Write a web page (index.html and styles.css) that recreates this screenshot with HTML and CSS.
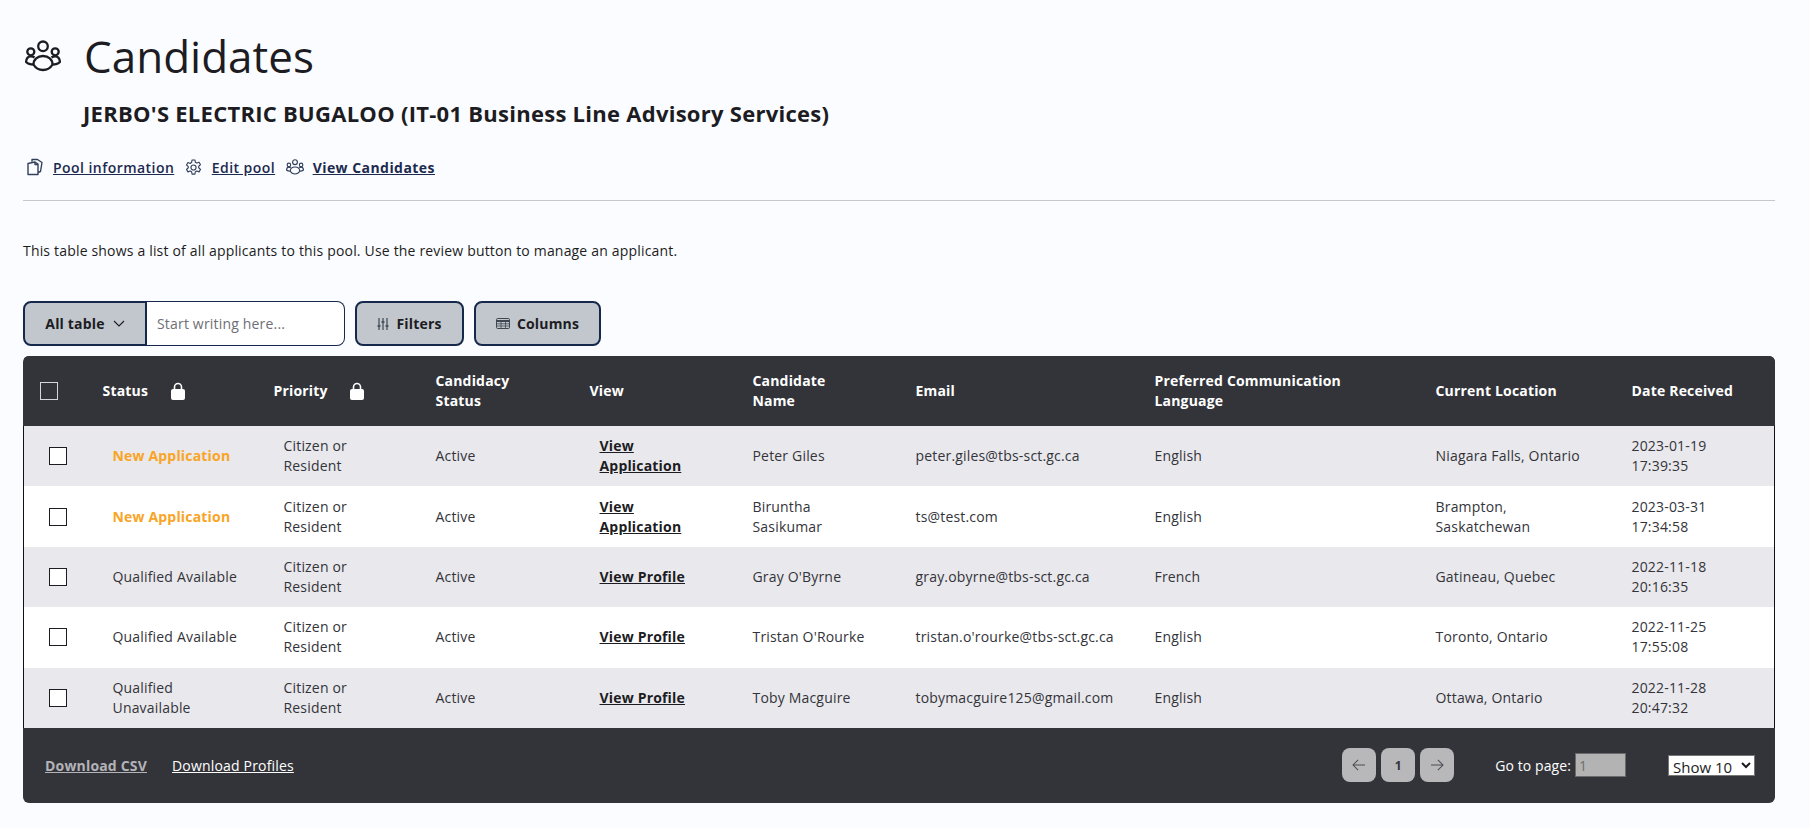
FILE: index.html
```html
<!DOCTYPE html>
<html lang="en">
<head>
<meta charset="utf-8">
<title>Candidates</title>
<link rel="stylesheet" href="styles.css">
</head>
<body>
<svg class="defs" width="0" height="0" aria-hidden="true">
  <symbol id="people" viewBox="0 0 36 32">
    <g fill="none" stroke="currentColor" stroke-width="2.300">
      <circle cx="18" cy="6.300" r="4.800"/>
      <circle cx="5.800" cy="11.800" r="3.500"/>
      <circle cx="30.200" cy="11.800" r="3.500"/>
      <path d="M8.500 24.500c0-5 4-8.500 9.500-8.500s9.500 3.500 9.500 8.500c-2 3.500-5.500 5.500-9.500 5.500s-7.500-2-9.500-5.500z"/>
      <path d="M9.500 17.500c-1-.8-2.200-1.200-3.700-1.200-2.800 0-4.500 2-4.700 5.700 1.500 1.600 4 2.500 7.600 2.500"/>
      <path d="M26.500 17.500c1-.8 2.200-1.200 3.700-1.200 2.800 0 4.500 2 4.700 5.700-1.500 1.600-4 2.500-7.600 2.500"/>
    </g>
  </symbol>
</svg>
<main class="page">
  <header class="head">
    <h1 class="title">
      <svg class="title-icon"><use href="#people"/></svg>
      <span>Candidates</span>
    </h1>
    <h2 class="subtitle">JERBO'S ELECTRIC BUGALOO (IT-01 Business Line Advisory Services)</h2>
    <nav class="tabs">
      <svg class="tab-icon" viewBox="0 0 16 18" fill="none" stroke="currentColor" stroke-width="1.400" stroke-linejoin="round">
        <path d="M1 5.500 8 4l3 2v10.500H1z"/>
        <path d="M5 3.800V1.500h5.500l4.500 3-1.500 9-2.500 1"/>
        <path d="M8 4v2.500h3"/>
      </svg>
      <a class="tab" href="#">Pool information</a>
      <svg class="tab-icon tab-gear" viewBox="0 0 18 18" fill="none" stroke="currentColor" stroke-width="1.200" stroke-linejoin="round">
        <circle cx="9" cy="9" r="2.700"/>
        <path d="M7.500 1h3l.5 2.500 1.500.8 2.400-.9 1.500 2.600-1.900 1.700v1.600l1.900 1.700-1.500 2.600-2.400-.9-1.500.8-.5 2.500h-3l-.5-2.500-1.500-.8-2.400.9-1.500-2.600 1.900-1.700V8.100L1.600 6.400l1.500-2.600 2.400.9L7 3.500z"/>
      </svg>
      <a class="tab" href="#">Edit pool</a>
      <svg class="tab-icon tab-people"><use href="#people"/></svg>
      <a class="tab tab-current" href="#">View Candidates</a>
    </nav>
  </header>
  <hr class="rule">
  <p class="intro">This table shows a list of all applicants to this pool. Use the review button to manage an applicant.</p>

  <div class="toolbar">
    <div class="search">
      <button class="search-scope" type="button">All table
        <svg class="chev" viewBox="0 0 12 7" fill="none" stroke="currentColor" stroke-width="1.100"><path d="M1 1l5 5 5-5"/></svg>
      </button>
      <input class="search-input" type="text" placeholder="Start writing here...">
    </div>
    <button class="tool tool-filters" type="button">
      <svg class="tool-icon" viewBox="0 0 12 12" fill="none" stroke="currentColor" stroke-width="1.200"><path d="M2 0v12M6 0v12M10 0v12"/><path d="M.5 8h3M4.500 4h3M8.500 8h3" stroke-width="1.500"/></svg>
      Filters
    </button>
    <button class="tool tool-columns" type="button">
      <svg class="tool-icon tool-icon-wide" viewBox="0 0 14 11" fill="none" stroke="currentColor"><rect x=".5" y=".5" width="13" height="10" rx="1.200"/><path d="M.5 3h13" stroke-width="2"/><path d="M.5 5.800h13M.5 8h13M5 3v7.500M9.500 3v7.500" stroke-width=".8"/></svg>
      Columns
    </button>
  </div>

  <section class="table-card">
    <table class="grid">
      <colgroup>
        <col class="c-check"><col class="c-status"><col class="c-priority"><col class="c-cand"><col class="c-view"><col class="c-name"><col class="c-email"><col class="c-lang"><col class="c-loc"><col class="c-date">
      </colgroup>
      <thead>
        <tr>
          <th class="th-check"><span class="box box-head"></span></th>
          <th><span class="locked">Status<svg class="lock lock-status" viewBox="0 0 14 18"><path d="M3.500 8V5a3.500 3.500 0 0 1 7 0v3" fill="none" stroke="#fff" stroke-width="1.600"/><rect x="0" y="7" width="14" height="11" rx="2" fill="#fff"/></svg></span></th>
          <th><span class="locked">Priority<svg class="lock lock-priority" viewBox="0 0 14 18"><path d="M3.500 8V5a3.500 3.500 0 0 1 7 0v3" fill="none" stroke="#fff" stroke-width="1.600"/><rect x="0" y="7" width="14" height="11" rx="2" fill="#fff"/></svg></span></th>
          <th>Candidacy<br>Status</th>
          <th>View</th>
          <th>Candidate<br>Name</th>
          <th>Email</th>
          <th>Preferred Communication<br>Language</th>
          <th>Current Location</th>
          <th>Date Received</th>
        </tr>
      </thead>
      <tbody>
        <tr class="odd">
          <td class="td-check"><span class="box"></span></td>
          <td class="inset new">New Application</td>
          <td class="inset">Citizen or<br>Resident</td>
          <td>Active</td>
          <td class="inset"><a class="view" href="#">View<br>Application</a></td>
          <td>Peter Giles</td>
          <td>peter.giles@tbs-sct.gc.ca</td>
          <td>English</td>
          <td>Niagara Falls, Ontario</td>
          <td>2023-01-19<br>17:39:35</td>
        </tr>
        <tr>
          <td class="td-check"><span class="box"></span></td>
          <td class="inset new">New Application</td>
          <td class="inset">Citizen or<br>Resident</td>
          <td>Active</td>
          <td class="inset"><a class="view" href="#">View<br>Application</a></td>
          <td>Biruntha<br>Sasikumar</td>
          <td>ts@test.com</td>
          <td>English</td>
          <td>Brampton,<br>Saskatchewan</td>
          <td>2023-03-31<br>17:34:58</td>
        </tr>
        <tr class="odd">
          <td class="td-check"><span class="box"></span></td>
          <td class="inset">Qualified Available</td>
          <td class="inset">Citizen or<br>Resident</td>
          <td>Active</td>
          <td class="inset"><a class="view" href="#">View Profile</a></td>
          <td>Gray O'Byrne</td>
          <td>gray.obyrne@tbs-sct.gc.ca</td>
          <td>French</td>
          <td>Gatineau, Quebec</td>
          <td>2022-11-18<br>20:16:35</td>
        </tr>
        <tr>
          <td class="td-check"><span class="box"></span></td>
          <td class="inset">Qualified Available</td>
          <td class="inset">Citizen or<br>Resident</td>
          <td>Active</td>
          <td class="inset"><a class="view" href="#">View Profile</a></td>
          <td>Tristan O'Rourke</td>
          <td>tristan.o'rourke@tbs-sct.gc.ca</td>
          <td>English</td>
          <td>Toronto, Ontario</td>
          <td>2022-11-25<br>17:55:08</td>
        </tr>
        <tr class="odd">
          <td class="td-check"><span class="box"></span></td>
          <td class="inset">Qualified<br>Unavailable</td>
          <td class="inset">Citizen or<br>Resident</td>
          <td>Active</td>
          <td class="inset"><a class="view" href="#">View Profile</a></td>
          <td>Toby Macguire</td>
          <td>tobymacguire125@gmail.com</td>
          <td>English</td>
          <td>Ottawa, Ontario</td>
          <td>2022-11-28<br>20:47:32</td>
        </tr>
      </tbody>
    </table>
    <footer class="table-foot">
      <a class="dl dl-csv" href="#">Download CSV</a>
      <a class="dl" href="#">Download Profiles</a>
      <div class="pager">
        <button class="pg" type="button"><svg class="arrow" viewBox="0 0 16 14" fill="none" stroke="currentColor" stroke-width="1.200"><path d="M15 7H1M7 1 1 7l6 6"/></svg></button>
        <button class="pg pg-num" type="button">1</button>
        <button class="pg" type="button"><svg class="arrow" viewBox="0 0 16 14" fill="none" stroke="currentColor" stroke-width="1.200"><path d="M1 7h14M9 1l6 6-6 6"/></svg></button>
      </div>
      <label class="goto">Go to page:
        <input class="goto-input" type="text" value="1" disabled>
      </label>
      <select class="show">
        <option>Show 10</option>
      </select>
    </footer>
  </section>
</main>
</body>
</html>
```

FILE: styles.css
```css
* { box-sizing: border-box; }
html, body { margin: 0; height: 100%; }
body {
  background: #fbfcff;
  color: #1c1c22;
  font-family: "Open Sans", "Noto Sans", sans-serif;
  font-size: 14px;
  letter-spacing: .18px;
  overflow: hidden;
}
.defs { position: absolute; }
.page { padding: 27px 35px 0 23px; }
.title {
  display: flex;
  align-items: center;
  gap: 23px;
  margin: 0;
  height: 58px;
  padding-left: 2px;
  font-size: 44px;
  font-weight: 400;
  line-height: 58px;
  letter-spacing: 0;
}
.title-icon { width: 36px; height: 32px; }
.subtitle {
  margin: 13px 0 0 60px;
  font-size: 22px;
  font-weight: 700;
  line-height: 30px;
  letter-spacing: .27px;
}
.tabs {
  display: flex;
  align-items: center;
  margin: 29px 0 0 4px;
  height: 20px;
  color: #33415c;
}
.tab-icon { width: 16px; height: 18px; flex: none; }
.tab-gear { width: 17px; height: 17px; }
.tab-people { width: 18px; height: 16px; }
.tab {
  margin: 0 10.5px 0 10px;
  color: #1b2a4e;
  font-size: 14px;
  font-weight: 600;
  letter-spacing: .45px;
}
.tab-current { margin-left: 9px; font-weight: 700; }
.rule { margin: 23px 0 0; border: 0; border-top: 1px solid #c5c7cc; }
.intro { margin: 40px 0 0; line-height: 20px; }
.toolbar { display: flex; gap: 10px; margin-top: 40px; height: 45px; }
.search { display: flex; width: 322px; }
.search-scope, .tool {
  display: flex;
  align-items: center;
  justify-content: center;
  background: #c1c7cd;
  border: 2px solid #16294d;
  color: #1c1c22;
  font: 700 14px "Open Sans", sans-serif;
  letter-spacing: .18px;
}
.search-scope { width: 124px; gap: 8px; border-radius: 8px 0 0 8px; }
.chev { width: 12px; height: 7px; }
.search-input {
  flex: 1;
  min-width: 0;
  padding: 0 10px;
  background: #fff;
  border: 1px solid #16294d;
  border-left: 0;
  border-radius: 0 8px 8px 0;
  font: 400 14px "Open Sans", sans-serif;
  letter-spacing: .18px;
}
.search-input::placeholder { color: #6e6e76; opacity: 1; }
.tool { gap: 7px; border-radius: 8px; }
.tool-filters { width: 109px; }
.tool-columns { width: 127px; }
.tool-icon { width: 12px; height: 12px; color: #3f4650; }
.tool-icon-wide { width: 14px; height: 11px; }
.table-card {
  margin-top: 10px;
  border-radius: 6px;
  overflow: hidden;
  background: #33343a;
}
.grid { width: 100%; table-layout: fixed; border-collapse: collapse; }
.c-check { width: 63px; }
.c-status { width: 171px; }
.c-priority { width: 162px; }
.c-cand { width: 154px; }
.c-view { width: 163px; }
.c-name { width: 163px; }
.c-email { width: 239px; }
.c-lang { width: 281px; }
.c-loc { width: 196px; }
.grid th {
  height: 70px;
  padding: 0 0 0 16px;
  background: #33343a;
  color: #fff;
  font-size: 14px;
  font-weight: 700;
  line-height: 20px;
  text-align: left;
}
.th-check, .td-check { padding: 0 !important; }
.th-check .box { margin-left: 16px; }
.td-check .box { margin-left: 25px; }
.box {
  display: block;
  width: 18px;
  height: 18px;
  border: 1px solid #1c1c22;
  background: #fff;
}
.box-head { background: transparent; border-color: #d7d7db; }
.locked { display: inline-flex; align-items: center; }
.lock { width: 14px; height: 18px; }
.lock-status { margin-left: 23px; }
.lock-priority { margin-left: 22px; }
.grid td {
  height: 60.4px;
  padding: 0 0 0 16px;
  color: #33343a;
  background: #fff;
  line-height: 20px;
}
.grid .odd td { background: #e9e8ec; }
.grid td:first-child { border-left: 1px solid #111; }
.grid td:last-child { border-right: 1px solid #111; }
.grid td.inset { padding-left: 26px; }
.grid td.new { color: #f9a425; font-weight: 700; }
.view { color: #1c1c22; font-weight: 700; }
.table-foot {
  display: flex;
  align-items: center;
  height: 75px;
  padding: 0 20px 0 22px;
  color: #fff;
}
.dl { margin-right: 25px; color: #fff; }
.dl-csv { color: #b3b3b8; font-weight: 700; }
.pager { display: flex; gap: 5px; margin-left: auto; }
.pg {
  display: flex;
  align-items: center;
  justify-content: center;
  width: 34px;
  height: 34px;
  padding: 0;
  background: #b8b8bb;
  border: 0;
  border-radius: 8px;
  color: #4c4c52;
  font: 700 12px "Open Sans", sans-serif;
}
.pg-num { color: #33343a; }
.arrow { width: 14px; height: 12px; }
.goto { display: flex; align-items: center; gap: 4px; margin-left: 41px; letter-spacing: .1px; }
.goto-input {
  width: 51px;
  height: 24px;
  padding: 0 3px;
  background: #b3b3b3;
  border: 1px solid #6b6b6b;
  color: #6f6f6f;
  font: 400 14px "Open Sans", sans-serif;
}
.show {
  width: 87px;
  height: 21px;
  margin-left: 42px;
  background: #fff;
  color: #1c1c22;
  border: 1px solid #767676;
  border-radius: 0;
  font: 400 15px "Open Sans", sans-serif;
}
```
